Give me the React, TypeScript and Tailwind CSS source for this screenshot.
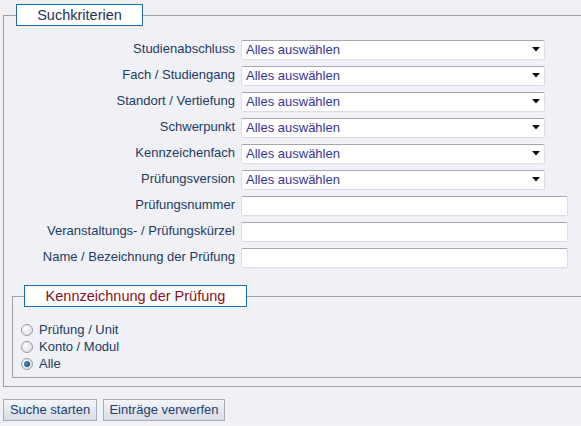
import React from 'react';

const selectFields = [
  'Studienabschluss',
  'Fach / Studiengang',
  'Standort / Vertiefung',
  'Schwerpunkt',
  'Kennzeichenfach',
  'Prüfungsversion',
];

const textFields = [
  'Prüfungsnummer',
  'Veranstaltungs- / Prüfungskürzel',
  'Name / Bezeichnung der Prüfung',
];

const radioOptions = [
  { label: 'Prüfung / Unit', checked: false },
  { label: 'Konto / Modul', checked: false },
  { label: 'Alle', checked: true },
];

function FakeSelect() {
  return (
    <div className="flex h-[20px] w-[304px] items-center justify-between rounded-[2px] border border-[#dcdde2] border-t-[#a5a6ad] bg-white pl-[4px] pr-[4px] text-[13px] text-[#35359b]">
      <span>Alles auswählen</span>
      <svg width="8" height="5" viewBox="0 0 8 5" className="mb-[1px]">
        <path d="M0 0h8L4 4.5z" fill="#111" />
      </svg>
    </div>
  );
}

function Radio({ checked }: { checked: boolean }) {
  return (
    <span className="flex h-[12px] w-[12px] items-center justify-center rounded-full border border-[#9a9ca3] bg-[radial-gradient(circle_at_35%_35%,#ffffff,#d4d6dc)]">
      {checked && (
        <span className="h-[6px] w-[6px] rounded-full bg-[radial-gradient(circle_at_35%_35%,#4f8fc7,#0d3a66)]" />
      )}
    </span>
  );
}

export default function App() {
  return (
    <div className="h-[426px] w-full overflow-hidden bg-[repeating-linear-gradient(180deg,#eeeff5_0px,#eeeff5_1px,#f2f3f8_1px,#f2f3f8_2px)] font-['Liberation_Sans',Arial,sans-serif]">
      <div className="w-[620px] pl-[3px] pt-[4px]">
        {/* Suchkriterien */}
        <fieldset className="border border-[#a0a0a4] pb-[8px] pl-[8px]">
          <legend className="ml-[4px] h-[22px] w-[127px] border border-[#1a6cb3] bg-white text-left">
            <span className="block text-center text-[14.5px] leading-[20px] text-[#1b3358]">Suchkriterien</span>
          </legend>

          <div className="grid grid-cols-[223px_auto] gap-x-[6px] gap-y-[6px] pt-[14px]">
            {selectFields.map((name) => (
              <React.Fragment key={name}>
                <div className="text-right text-[13px] leading-[17px] text-[#1b3b63]">{name}</div>
                <FakeSelect />
              </React.Fragment>
            ))}
            {textFields.map((name) => (
              <React.Fragment key={name}>
                <div className="text-right text-[13px] leading-[17px] text-[#1b3b63]">{name}</div>
                <div className="h-[20px] w-[327px] rounded-[2px] border border-[#dcdde2] border-t-[#a5a6ad] bg-white" />
              </React.Fragment>
            ))}
          </div>

          {/* Kennzeichnung der Prüfung */}
          <fieldset className="mt-[17px] border border-[#a0a0a4] pb-[5px] pl-[8px]">
            <legend className="ml-[3px] h-[22px] w-[223px] border border-[#1a6cb3] bg-white text-left">
              <span className="block text-center text-[14.5px] leading-[20px] text-[#8c0f1c]">Kennzeichnung der Prüfung</span>
            </legend>
            <div className="flex flex-col pt-[14px]">
              {radioOptions.map((opt) => (
                <label key={opt.label} className="flex h-[17px] items-center gap-[6px] text-[13px] text-[#1b3b63]">
                  <Radio checked={opt.checked} />
                  {opt.label}
                </label>
              ))}
            </div>
          </fieldset>
        </fieldset>

        <div className="mt-[12px] flex gap-[6px]">
          <button className="h-[22px] w-[94px] border border-[#a9abb0] bg-[linear-gradient(180deg,#f3f5f9,#d6dce6)] text-[13px] text-[#1c3f6e]">
            Suche starten
          </button>
          <button className="h-[22px] w-[122px] border border-[#a9abb0] bg-[linear-gradient(180deg,#f3f5f9,#d6dce6)] text-[13px] text-[#1c3f6e]">
            Einträge verwerfen
          </button>
        </div>
      </div>
    </div>
  );
}
